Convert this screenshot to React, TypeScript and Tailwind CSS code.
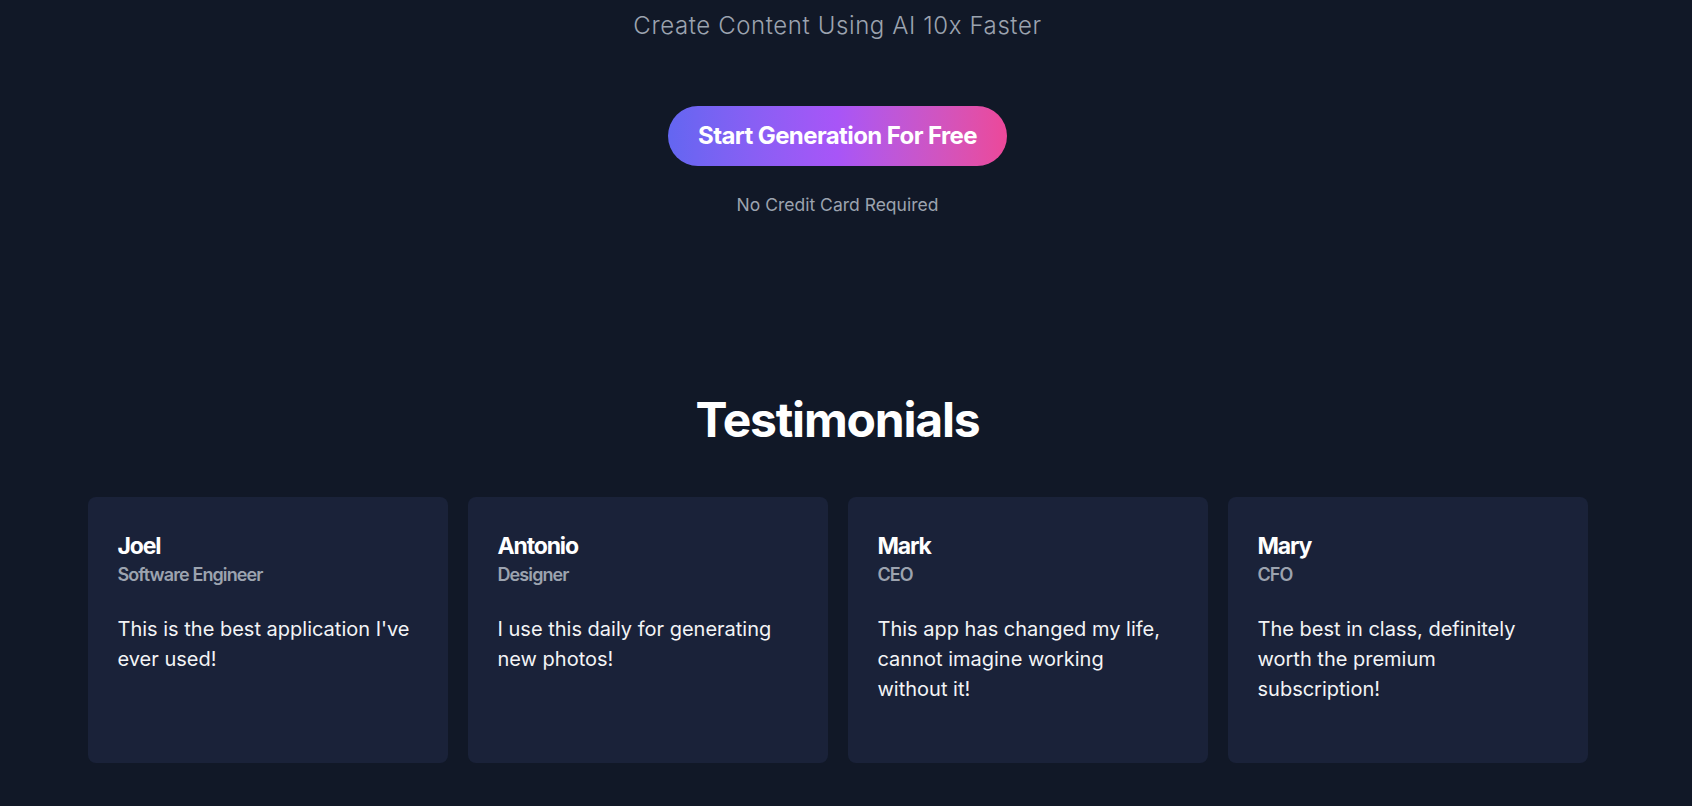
import React from "react";

const testimonials = [
  { name: "Joel", role: "Software Engineer", text: "This is the best application I've ever used!" },
  { name: "Antonio", role: "Designer", text: "I use this daily for generating new photos!" },
  { name: "Mark", role: "CEO", text: "This app has changed my life, cannot imagine working without it!" },
  { name: "Mary", role: "CFO", text: "The best in class, definitely worth the premium subscription!" },
];

export default function App() {
  return (
    <div
      className="min-h-screen w-full bg-[#111827] pr-[17px] text-white"
      style={{ fontFamily: "Inter, 'Noto Sans', sans-serif" }}
    >
      <section className="flex flex-col items-center pt-[10px]">
        <p className="text-2xl leading-8 font-light tracking-wide text-[#9ca3af]">Create Content Using AI 10x Faster</p>
        <button className="mt-[64px] h-[60px] rounded-full bg-gradient-to-r from-[#6366f1] via-[#a855f7] to-[#ec4899] px-[30px] text-2xl leading-8 font-bold tracking-tight text-white">
          Start Generation For Free
        </button>
        <p className="mt-[25px] text-[17.5px] leading-7 text-[#9ca3af]">No Credit Card Required</p>
      </section>

      <section className="mt-[177px] flex flex-col items-center">
        <h2 className="text-5xl leading-[48px] font-bold tracking-tight text-white">Testimonials</h2>
        <div className="mt-[53px] grid w-[1500px] grid-cols-4 gap-5">
          {testimonials.map((t) => (
            <div key={t.name} className="h-[266px] rounded-lg bg-[#1a2239] px-[30px] pt-[34px]">
              <h3 className="text-[23px] leading-[30px] font-bold tracking-tighter text-white">{t.name}</h3>
              <p className="text-lg leading-7 font-semibold tracking-tighter text-[#9ca3af]">{t.role}</p>
              <p className="mt-[25px] text-xl leading-[30px] text-[#f3f4f6]">{t.text}</p>
            </div>
          ))}
        </div>
      </section>
    </div>
  );
}
